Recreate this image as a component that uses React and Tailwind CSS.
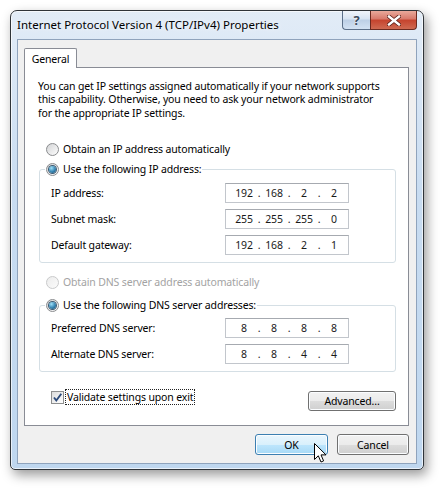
import React from "react";

const Radio = ({ checked, disabled }) => (
    <span
        className={`w-[13px] h-[13px] rounded-full border shrink-0 flex items-center justify-center ${
            disabled
                ? "border-[#c9cacb] bg-[linear-gradient(135deg,#ececec,#fbfbfb)]"
                : "border-[#8a8c8e] bg-[linear-gradient(135deg,#d3d4d6,#fdfdfd)]"
        }`}
    >
        {checked && (
            <span className="w-[7px] h-[7px] rounded-full bg-[radial-gradient(circle_at_35%_30%,#9fe0f8,#3584b2_55%,#174a6c)] shadow-[0_0_0_1px_#3c5a72]" />
        )}
    </span>
);

const IpField = ({ parts }) => (
    <div className="w-[124px] h-[20px] border border-[#c2c6cc] border-t-[#a6aab0] bg-white flex items-center pl-[6px] text-[#1a1a1a]">
        {parts.map((p, i) => (
            <React.Fragment key={i}>
                {i > 0 && <span className="w-[6px] text-center">.</span>}
                <span className="w-[24px] text-center">{p}</span>
            </React.Fragment>
        ))}
    </div>
);

const Row = ({ label, parts }) => (
    <div className="h-[20px] flex items-center">
        <span className="w-[174px]">{label}</span>
        <IpField parts={parts} />
    </div>
);

const Button = ({ children, hot, className }) => (
    <div
        className={`h-[20px] rounded-[3px] border flex items-center justify-center shadow-[inset_0_0_0_1px_#fbfdff] ${
            hot
                ? "border-[#3c7fb1] bg-[linear-gradient(#eaf6fd_0%,#d9f0fc_50%,#bee6fd_50%,#a7d9f5_100%)]"
                : "border-[#707070] bg-[linear-gradient(#f2f2f2_0%,#ebebeb_50%,#dddddd_50%,#cfcfcf_100%)]"
        } ${className}`}
    >
        {children}
    </div>
);

export default function App() {
    return (
        <div
            className="relative w-[442px] h-[489px] bg-white pt-[10px] pl-[10px] overflow-hidden text-[10.5px] tracking-[-0.15px] leading-[14px] text-black whitespace-nowrap"
            style={{ fontFamily: '"Noto Sans", "Open Sans", sans-serif' }}
        >
            <div className="w-[414px] h-[460px] rounded-t-[7px] rounded-b-[5px] border border-[#2f3439] bg-[linear-gradient(#e2ecf7,#c8dcf1_40%,#bfd7ef)] shadow-[inset_0_0_0_1px_rgba(255,255,255,0.65),3px_5px_12px_rgba(0,0,0,0.4)]">
                {/* title bar */}
                <div className="h-[28px] flex items-start">
                    <span className="pl-[6px] pt-[6px] text-[11.5px] tracking-normal leading-[16px] [text-shadow:0_0_6px_#ffffff]">
                        Internet Protocol Version 4 (TCP/IPv4) Properties
                    </span>
                    <div className="ml-auto mr-[6px] flex">
                        <div className="w-[28px] h-[19px] border border-[#5b6f89] border-t-0 border-r-0 rounded-bl-[4px] bg-[linear-gradient(#f0f5fb,#d7e4f3_45%,#bccfe6_50%,#d3e2f3)] flex items-center justify-center text-[13px] font-bold text-[#3b4a5c] [text-shadow:0_0_2px_#ffffff]">
                            ?
                        </div>
                        <div className="w-[47px] h-[19px] border border-[#6b2a20] border-t-0 rounded-br-[4px] bg-[linear-gradient(#e9a99b,#d7786a_45%,#c5432d_50%,#cf6a52)] flex items-center justify-center">
                            <svg width="14" height="11" viewBox="0 0 14 11">
                                <path d="M2 1.5 L12 9.5 M12 1.5 L2 9.5" stroke="#5a1f17" strokeWidth="4" strokeLinecap="square" />
                                <path d="M2 1.5 L12 9.5 M12 1.5 L2 9.5" stroke="#ffffff" strokeWidth="2.4" strokeLinecap="square" />
                            </svg>
                        </div>
                    </div>
                </div>

                {/* client area */}
                <div className="mx-[6px] h-[425px] border border-[#8fa3bc] bg-[#f0f0f0] pt-[8px] pl-[6px] pr-[7px]">
                    <div className="relative z-10 w-[53px] h-[20px] -mb-px border border-b-0 border-[#898c95] rounded-t-[2px] bg-white flex items-center justify-center">
                        General
                    </div>
                    <div className="h-[359px] border border-[#898c95] bg-white pt-[12px] pl-[14px] pr-[12px]">
                        <p className="-ml-px leading-[13.4px]">
                            You can get IP settings assigned automatically if your network supports
                            <br />
                            this capability. Otherwise, you need to ask your network administrator
                            <br />
                            for the appropriate IP settings.
                        </p>

                        <div className="mt-[22px] pl-[7px] h-[14px] flex items-center gap-[4px]">
                            <Radio />
                            <span>Obtain an IP address automatically</span>
                        </div>

                        <fieldset className="mt-[6px] border border-[#d5dfe5] rounded-[3px]">
                            <legend className="ml-[5px] px-[1px] h-[14px] flex items-center gap-[4px]">
                                <Radio checked />
                                <span>Use the following IP address:</span>
                            </legend>
                            <div className="pl-[11px] pt-[7px] pb-[7px] flex flex-col gap-[6px]">
                                <Row label="IP address:" parts={["192", "168", "2", "2"]} />
                                <Row label="Subnet mask:" parts={["255", "255", "255", "0"]} />
                                <Row label="Default gateway:" parts={["192", "168", "2", "1"]} />
                            </div>
                        </fieldset>

                        <div className="mt-[12px] pl-[7px] h-[14px] flex items-center gap-[4px] text-[#a3a3a3]">
                            <Radio disabled />
                            <span>Obtain DNS server address automatically</span>
                        </div>

                        <fieldset className="mt-[9px] border border-[#d5dfe5] rounded-[3px]">
                            <legend className="ml-[5px] px-[1px] h-[14px] flex items-center gap-[4px]">
                                <Radio checked />
                                <span>Use the following DNS server addresses:</span>
                            </legend>
                            <div className="pl-[11px] pt-[6px] pb-[7px] flex flex-col gap-[6px]">
                                <Row label="Preferred DNS server:" parts={["8", "8", "8", "8"]} />
                                <Row label="Alternate DNS server:" parts={["8", "8", "4", "4"]} />
                            </div>
                        </fieldset>

                        <div className="mt-[17px] flex items-start justify-between">
                            <div className="pl-[12px] h-[16px] flex items-center gap-[1px]">
                                <span className="w-[13px] h-[13px] border border-[#8e8f8f] bg-[linear-gradient(135deg,#dcdcdc,#ffffff)] flex items-center justify-center">
                                    <svg width="11" height="11" viewBox="0 0 11 11">
                                        <path d="M2 5.5 L4.3 8.5 L9.3 1.8" fill="none" stroke="#2c4a7a" strokeWidth="1.9" />
                                    </svg>
                                </span>
                                <span className="border border-dotted border-[#222] px-[1px] leading-[14px]">
                                    Validate settings upon exit
                                </span>
                            </div>
                            <Button className="mt-[2px] w-[88px]">Advanced...</Button>
                        </div>
                    </div>

                    <div className="mt-[8px] flex justify-end gap-[9px]">
                        <Button hot className="w-[73px] h-[21px]">OK</Button>
                        <Button className="w-[72px] h-[21px]">Cancel</Button>
                    </div>
                </div>
            </div>

            {/* mouse pointer */}
            <svg className="absolute left-[314px] top-[443px]" width="14" height="21" viewBox="0 0 14 21">
                <path
                    d="M0.5 0.5 L0.5 16.5 L4.3 12.8 L7 19 L9.6 17.9 L7 11.9 L12 11.9 Z"
                    fill="#ffffff"
                    stroke="#000000"
                    strokeWidth="1"
                    strokeLinejoin="miter"
                />
            </svg>
        </div>
    );
}
